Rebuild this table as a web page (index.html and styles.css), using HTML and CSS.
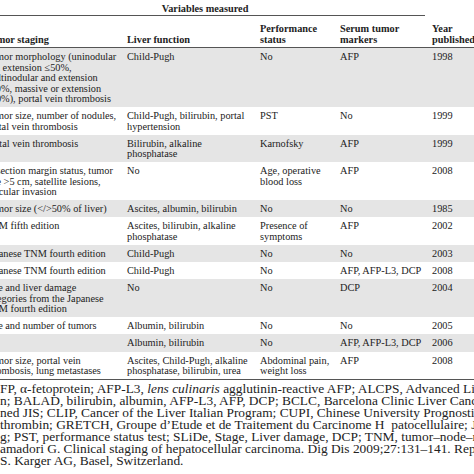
FILE: index.html
```html
<!DOCTYPE html>
<html lang="en">
<head>
<meta charset="utf-8">
<title>Clinical staging systems for hepatocellular carcinoma</title>
<link rel="stylesheet" href="styles.css">
</head>
<body>
<div class="sheet">
  <table class="staging">
    <colgroup>
      <col class="c-tumor">
      <col class="c-liver">
      <col class="c-perf">
      <col class="c-serum">
      <col class="c-year">
    </colgroup>
    <thead>
      <tr class="group">
        <th colspan="4"><span class="group-label">Variables measured</span></th>
        <th></th>
      </tr>
      <tr class="heads">
        <th>Tumor staging</th>
        <th>Liver function</th>
        <th>Performance<br>status</th>
        <th>Serum tumor<br>markers</th>
        <th>Year<br>published</th>
      </tr>
    </thead>
    <tbody>
      <tr class="alt">
        <td>Tumor morphology (uninodular<br>and extension ≤50%,<br>multinodular and extension<br>≤50%, massive or extension<br>&gt;50%), portal vein thrombosis</td>
        <td>Child-Pugh</td>
        <td>No</td>
        <td>AFP</td>
        <td>1998</td>
      </tr>
      <tr>
        <td>Tumor size, number of nodules,<br>portal vein thrombosis</td>
        <td>Child-Pugh, bilirubin, portal<br>hypertension</td>
        <td>PST</td>
        <td>No</td>
        <td>1999</td>
      </tr>
      <tr class="alt">
        <td>Portal vein thrombosis</td>
        <td>Bilirubin, alkaline<br>phosphatase</td>
        <td>Karnofsky</td>
        <td>AFP</td>
        <td>1999</td>
      </tr>
      <tr>
        <td>Resection margin status, tumor<br>size &gt;5 cm, satellite lesions,<br>vascular invasion</td>
        <td>No</td>
        <td>Age, operative<br>blood loss</td>
        <td>AFP</td>
        <td>2008</td>
      </tr>
      <tr class="alt">
        <td>Tumor size (&lt;/&gt;50% of liver)</td>
        <td>Ascites, albumin, bilirubin</td>
        <td>No</td>
        <td>No</td>
        <td>1985</td>
      </tr>
      <tr>
        <td>TNM fifth edition</td>
        <td>Ascites, bilirubin, alkaline<br>phosphatase</td>
        <td>Presence of<br>symptoms</td>
        <td>AFP</td>
        <td>2002</td>
      </tr>
      <tr class="alt">
        <td>Japanese TNM fourth edition</td>
        <td>Child-Pugh</td>
        <td>No</td>
        <td>No</td>
        <td>2003</td>
      </tr>
      <tr>
        <td>Japanese TNM fourth edition</td>
        <td>Child-Pugh</td>
        <td>No</td>
        <td>AFP, AFP-L3, DCP</td>
        <td>2008</td>
      </tr>
      <tr class="alt">
        <td>Size and liver damage<br>categories from the Japanese<br>TNM fourth edition</td>
        <td>No</td>
        <td>No</td>
        <td>DCP</td>
        <td>2004</td>
      </tr>
      <tr>
        <td>Size and number of tumors</td>
        <td>Albumin, bilirubin</td>
        <td>No</td>
        <td>No</td>
        <td>2005</td>
      </tr>
      <tr class="alt">
        <td></td>
        <td>Albumin, bilirubin</td>
        <td>No</td>
        <td>AFP, AFP-L3, DCP</td>
        <td>2006</td>
      </tr>
      <tr class="last">
        <td>Tumor size, portal vein<br>thrombosis, lung metastases</td>
        <td>Ascites, Child-Pugh, alkaline<br>phosphatase, bilirubin, urea</td>
        <td>Abdominal pain,<br>weight loss</td>
        <td>AFP</td>
        <td>2008</td>
      </tr>
    </tbody>
  </table>
  <div class="notes">
    <div class="note-line">FP, α-fetoprotein; AFP-L3, <i>lens culinaris</i> agglutinin-reactive AFP; ALCPS, Advanced Liver Cancer Prognostic</div>
    <div class="note-line">n; BALAD, bilirubin, albumin, AFP-L3, AFP, DCP; BCLC, Barcelona Clinic Liver Cancer; bm-JIS, biomarker</div>
    <div class="note-line">ned JIS; CLIP, Cancer of the Liver Italian Program; CUPI, Chinese University Prognostic Index; DCP, des-γ-carboxy</div>
    <div class="note-line">thrombin; GRETCH, Groupe d’Etude et de Traitement du Carcinome H&nbsp; patocellulaire; JIS, Japan Integrated</div>
    <div class="note-line">g; PST, performance status test; SLiDe, Stage, Liver damage, DCP; TNM, tumor–node–metastasis. From</div>
    <div class="note-line">amadori G. Clinical staging of hepatocellular carcinoma. Dig Dis 2009;27:131–141. Reprinted with permission of</div>
    <div class="note-line">S. Karger AG, Basel, Switzerland.</div>
  </div>
</div>
</body>
</html>
```

FILE: styles.css
```css
html, body {
  margin: 0;
  padding: 0;
  background: #ffffff;
}

body {
  width: 474px;
  height: 474px;
  overflow: hidden;
  font-family: "Liberation Serif", "Times New Roman", serif;
  color: #222222;
}

.sheet {
  width: 474px;
  height: 474px;
  overflow: hidden;
}

.staging {
  margin-left: -15px;
  width: 530px;
  table-layout: fixed;
  border-collapse: collapse;
  font-size: 10.3px;
  line-height: 10.5px;
}

.c-tumor { width: 142px; }
.c-liver { width: 133px; }
.c-perf  { width: 80px; }
.c-serum { width: 92px; }
.c-year  { width: 83px; }

.staging th,
.staging td {
  padding: 4px 4px 2.6px 0;
  text-align: left;
  vertical-align: top;
}

.group th {
  padding: 3px 0 0 0;
  font-weight: bold;
}

.group-label {
  display: block;
  margin-right: 7px;
  padding-bottom: 1px;
  line-height: 11px;
  text-align: center;
  border-bottom: 1.5px solid #555555;
}

.heads th {
  padding: 8px 4px 2px 0;
  vertical-align: bottom;
  font-weight: bold;
  border-bottom: 1.5px solid #555555;
}

.staging tbody tr.alt td {
  background: #e5e5e5;
}

.staging tbody tr.last td {
  border-bottom: 1.5px solid #555555;
}

.notes {
  margin-top: 3px;
  font-size: 13.4px;
  line-height: 12px;
  white-space: nowrap;
}

.note-line {
  display: block;
}
```
